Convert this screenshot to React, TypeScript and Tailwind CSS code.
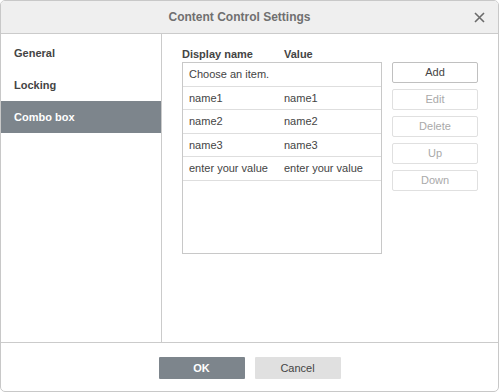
import React from "react";

const rows: [string, string][] = [
  ["Choose an item.", ""],
  ["name1", "name1"],
  ["name2", "name2"],
  ["name3", "name3"],
  ["enter your value", "enter your value"],
];

export default function App() {
  return (
    <div
      className="w-[499px] h-[392px] border border-[#c8c8c8] rounded-[5px] overflow-hidden bg-white flex flex-col text-[11px] text-[#444]"
      style={{ fontFamily: '"Liberation Sans", Arial, sans-serif' }}
    >
      <div className="h-[33px] shrink-0 bg-[#efefef] border-b border-[#cbcbcb] flex items-center justify-center pr-[20px] relative">
        <span className="text-[12px] font-bold text-[#707070]">Content Control Settings</span>
        <svg className="absolute right-[13px] top-[11px]" width="11" height="11" viewBox="0 0 11 11">
          <path d="M1 1L10 10M10 1L1 10" stroke="#6b6b6b" strokeWidth="1.6" />
        </svg>
      </div>
      <div className="flex-1 flex min-h-0">
        <div className="w-[161px] shrink-0 border-r border-[#cbcbcb] pt-[3px] flex flex-col">
          <div className="h-[32px] flex items-center pl-[13px] font-bold text-[#444]">General</div>
          <div className="h-[32px] flex items-center pl-[13px] font-bold text-[#444]">Locking</div>
          <div className="h-[32px] flex items-center pl-[13px] font-bold text-white bg-[#7d858c]">Combo box</div>
        </div>
        <div className="flex-1 pl-[20px] pt-[13px] flex">
          <div className="flex flex-col">
            <div className="h-[15px] leading-[14px] flex font-bold text-[#444]">
              <span className="w-[102px]">Display name</span>
              <span>Value</span>
            </div>
            <div className="w-[200px] h-[192px] border border-[#c8c8c8] flex flex-col">
              {rows.map(([a, b], i) => (
                <div key={i} className="h-[23.5px] shrink-0 border-b border-[#dedede] flex items-center pl-[6px]">
                  <span className="w-[95px] whitespace-nowrap">{a}</span>
                  <span className="whitespace-nowrap">{b}</span>
                </div>
              ))}
            </div>
          </div>
          <div className="ml-[10px] mt-[15px] flex flex-col gap-[6px]">
            <button className="w-[86px] h-[21px] border border-[#c0c0c0] rounded-[2px] bg-white text-[11px] text-[#444]">Add</button>
            {["Edit", "Delete", "Up", "Down"].map((t) => (
              <button key={t} className="w-[86px] h-[21px] border border-[#e0e0e0] rounded-[2px] bg-white text-[11px] text-[#a9a9a9]">
                {t}
              </button>
            ))}
          </div>
        </div>
      </div>
      <div className="h-[49px] shrink-0 border-t border-[#cbcbcb] flex justify-center pt-[14px] gap-[10px]">
        <button className="w-[86px] h-[22px] rounded-[1px] bg-[#7d858c] text-white font-bold text-[11px]">OK</button>
        <button className="w-[86px] h-[22px] rounded-[1px] bg-[#e0e0e0] text-[#444] text-[11px]">Cancel</button>
      </div>
    </div>
  );
}
